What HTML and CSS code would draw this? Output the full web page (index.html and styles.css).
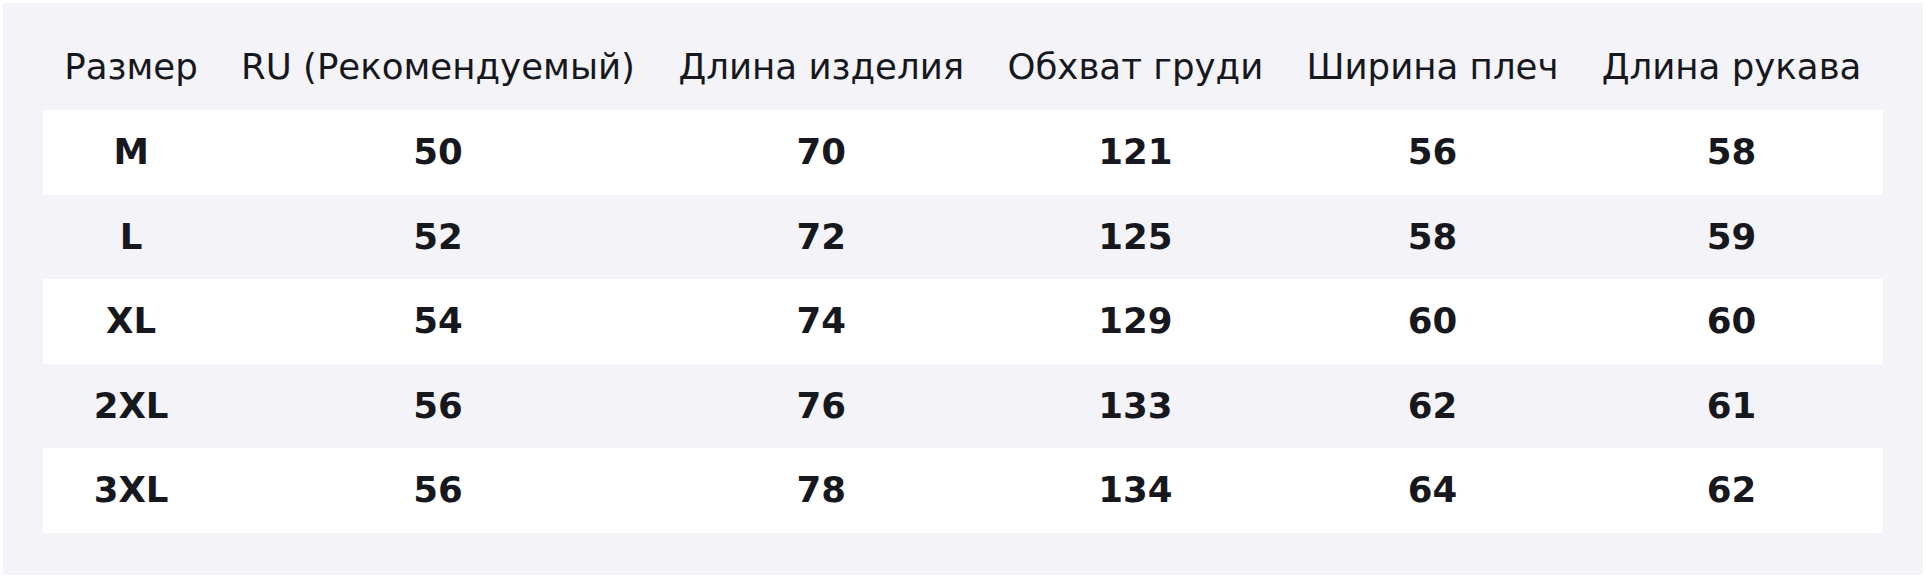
FILE: index.html
```html
<!DOCTYPE html>
<html lang="ru">
<head>
<meta charset="utf-8">
<title>Таблица размеров</title>
<link rel="stylesheet" href="styles.css">
</head>
<body>
<div class="panel">
  <table class="sizes">
    <thead>
      <tr>
        <th>Размер</th>
        <th>RU (Рекомендуемый)</th>
        <th>Длина изделия</th>
        <th>Обхват груди</th>
        <th>Ширина плеч</th>
        <th>Длина рукава</th>
      </tr>
    </thead>
    <tbody>
      <tr class="alt"><td>M</td><td>50</td><td>70</td><td>121</td><td>56</td><td>58</td></tr>
      <tr><td>L</td><td>52</td><td>72</td><td>125</td><td>58</td><td>59</td></tr>
      <tr class="alt"><td>XL</td><td>54</td><td>74</td><td>129</td><td>60</td><td>60</td></tr>
      <tr><td>2XL</td><td>56</td><td>76</td><td>133</td><td>62</td><td>61</td></tr>
      <tr class="alt"><td>3XL</td><td>56</td><td>78</td><td>134</td><td>64</td><td>62</td></tr>
    </tbody>
  </table>
</div>
</body>
</html>
```
FILE: styles.css
```css
html, body {
  background: #ffffff;
}
body {
  margin: 3px;
  font-family: "DejaVu Sans", sans-serif;
  color: #17171e;
}
.panel {
  background: #f3f3f8;
  padding: 40px 40px 42px 40px;
}
.sizes {
  width: 100%;
  border-collapse: collapse;
  border-spacing: 0;
}
.sizes th,
.sizes td {
  font-size: 35.6px;
  line-height: 42.6px;
  text-align: center;
  white-space: nowrap;
  padding-left: 21px;
  padding-right: 21px;
}
.sizes th {
  font-weight: normal;
  padding-top: 3.4px;
  padding-bottom: 21px;
}
.sizes td {
  font-weight: bold;
  padding-top: 21px;
  padding-bottom: 21px;
}
.sizes tr.alt td {
  background: #ffffff;
}
```
